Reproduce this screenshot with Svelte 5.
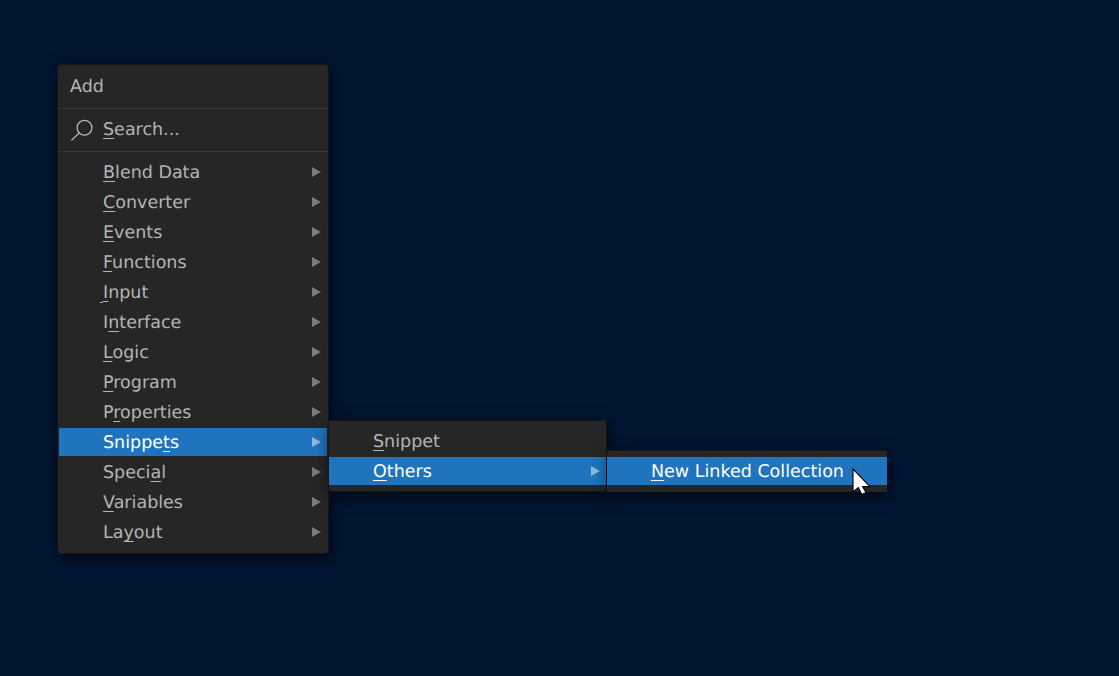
<script lang="ts">
  type Item = { before: string; key: string; after: string; active?: boolean; lead?: boolean }

  const items: Item[] = [
    { before: '', key: 'B', after: 'lend Data' },
    { before: '', key: 'C', after: 'onverter' },
    { before: '', key: 'E', after: 'vents' },
    { before: '', key: 'F', after: 'unctions' },
    { before: '', key: 'I', after: 'nput', lead: true },
    { before: 'I', key: 'n', after: 'terface' },
    { before: '', key: 'L', after: 'ogic' },
    { before: '', key: 'P', after: 'rogram' },
    { before: 'P', key: 'r', after: 'operties' },
    { before: 'Snippe', key: 't', after: 's', active: true },
    { before: 'Speci', key: 'a', after: 'l' },
    { before: '', key: 'V', after: 'ariables' },
    { before: 'La', key: 'y', after: 'out' },
  ]
</script>

<main class="desktop">
  <div class="menu main-menu">
    <div class="title">Add</div>
    <div class="search">
      <svg class="lens" width="24" height="24" viewBox="0 0 24 24" fill="none" stroke="#b4b4b4" stroke-width="1.3">
        <circle cx="14.5" cy="9.8" r="7.4" />
        <path d="M9.2 15 1.8 22" stroke-linecap="round" />
      </svg>
      <span class="label"><u>S</u>earch...</span>
    </div>
    <div class="list">
      {#each items as item}
        <div class="row {item.active ? 'active' : ''}">
          <span class="label">{item.before}<u class={item.lead ? 'lead' : ''}>{item.key}</u>{item.after}</span>
          <span class="arrow"></span>
        </div>
      {/each}
    </div>
  </div>

  <div class="menu sub-menu">
    <div class="row"><span class="label"><u>S</u>nippet</span></div>
    <div class="row active">
      <span class="label"><u>O</u>thers</span>
      <span class="arrow"></span>
    </div>
  </div>

  <div class="menu leaf-menu">
    <div class="row active"><span class="label"><u>N</u>ew Linked Collection</span></div>
  </div>

  <svg class="cursor" width="20" height="28" viewBox="0 0 20 28">
    <path d="M1 1V24L6.3 19.6 9.8 26.6 14 24.6 10.6 18.6H18Z" fill="#fff" stroke="#000" stroke-width="1.1" />
  </svg>
</main>

<style>
  :global(body) {
    margin: 0;
    background: #021532;
  }
  .desktop {
    position: relative;
    width: 1119px;
    height: 676px;
    overflow: hidden;
    background: #021532;
    font-family: 'DejaVu Sans', sans-serif;
    font-size: 17.5px;
    color: #b4b4b4;
    text-rendering: geometricPrecision;
  }
  .menu {
    position: absolute;
    box-sizing: border-box;
    background: #262626;
    border: 1px solid #161616;
    box-shadow: 2px 4px 16px rgba(0, 0, 0, 0.65);
  }
  .main-menu {
    left: 57px;
    top: 64px;
    width: 272px;
    height: 490px;
    border-radius: 4px;
  }
  .sub-menu {
    left: 328px;
    top: 420px;
    width: 279px;
    height: 72px;
    padding-top: 6px;
    border-radius: 0 3px 3px 3px;
  }
  .leaf-menu {
    left: 607px;
    top: 450px;
    width: 280px;
    height: 42px;
    padding-top: 6px;
    border-width: 1px 0 0;
    border-radius: 0;
  }
  .title {
    height: 43px;
    padding-left: 12px;
    display: flex;
    align-items: center;
    border-bottom: 1px solid #383838;
  }
  .search {
    height: 42px;
    display: flex;
    align-items: center;
    border-bottom: 1px solid #383838;
    padding-left: 12px;
  }
  .search .label {
    padding-top: 0;
  }
  .lens {
    flex: none;
    margin-right: 9px;
  }
  .list {
    padding-top: 6px;
  }
  .row {
    height: 28px;
    margin-bottom: 2px;
    padding-left: 44px;
    display: flex;
    align-items: center;
    justify-content: space-between;
    white-space: nowrap;
  }
  .main-menu .row {
    margin-left: 1px;
    margin-right: 1px;
  }
  .row.active {
    background: #1f74bd;
    color: #fff;
  }
  .label {
    display: block;
    line-height: 28px;
    padding-top: 2px;
  }
  u {
    position: relative;
    text-decoration-thickness: 1px;
    text-underline-offset: 3px;
    text-decoration-skip-ink: none;
  }
  u.lead::before {
    content: '';
    position: absolute;
    left: -3px;
    bottom: 0;
    width: 3px;
    height: 1px;
    background: currentColor;
  }
  .arrow {
    width: 0;
    height: 0;
    margin-right: 6px;
    border-left: 9px solid #7c7c7c;
    border-top: 5px solid transparent;
    border-bottom: 5px solid transparent;
  }
  .main-menu .row.active .arrow,
  .sub-menu .row.active .arrow {
    border-left-color: #8fb9dd;
  }
  .cursor {
    position: absolute;
    left: 852px;
    top: 468px;
  }
</style>
